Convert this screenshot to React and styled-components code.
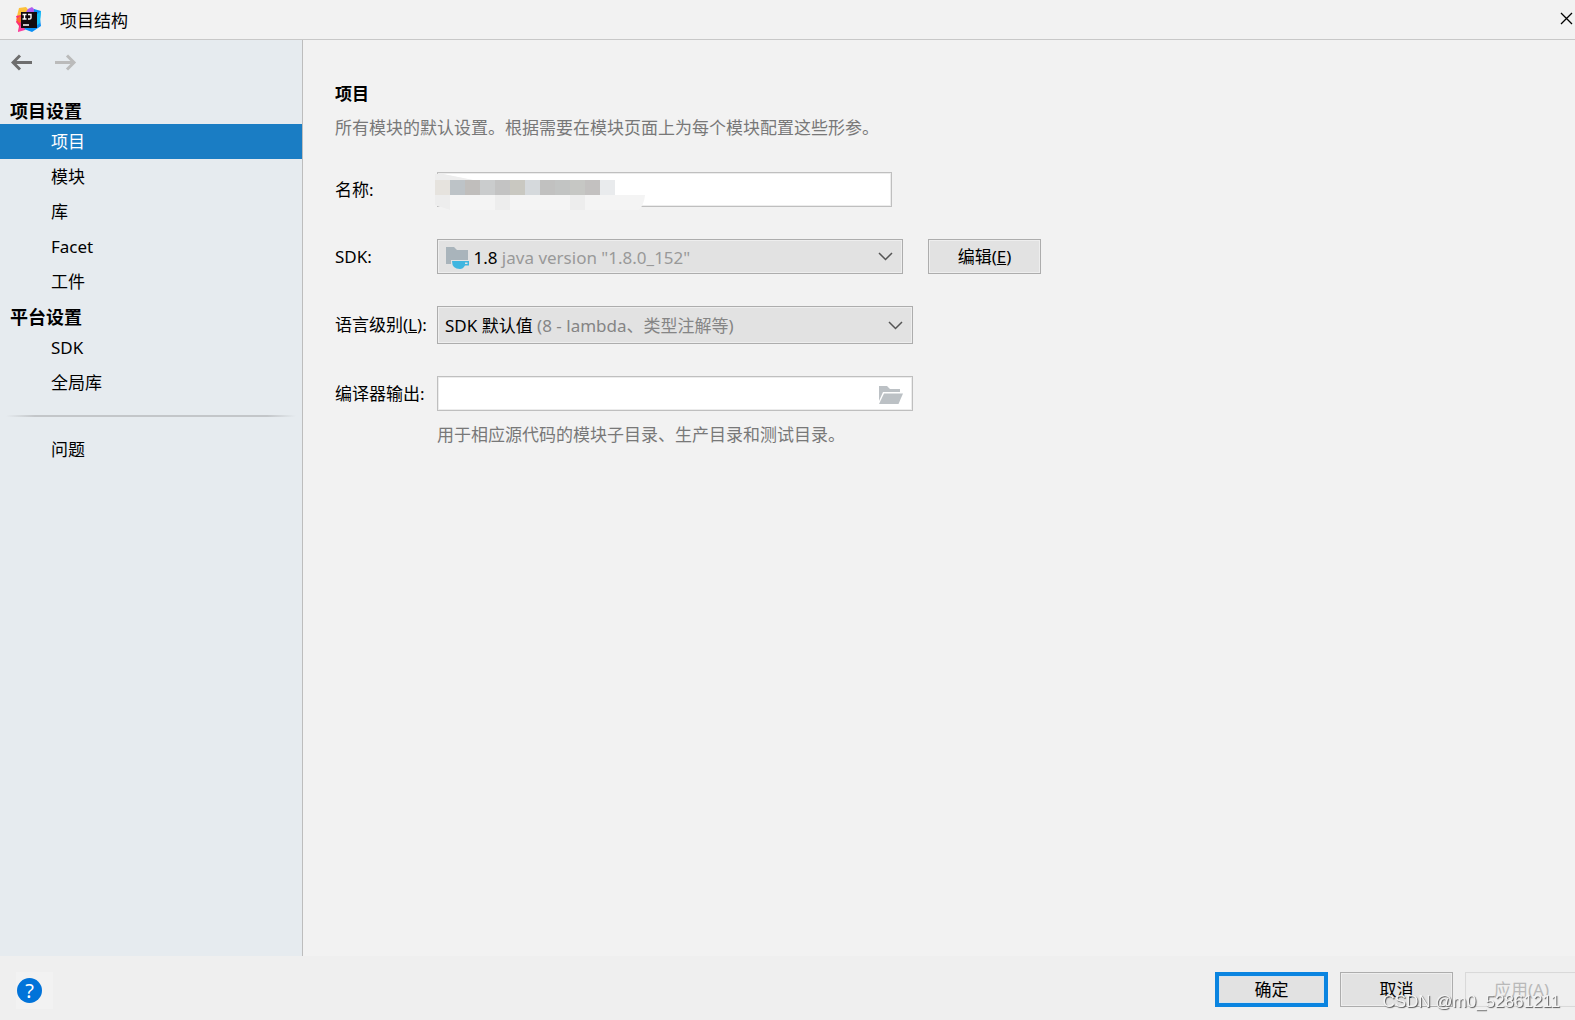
//Packages
import React, { useState } from "react";
import styled, { createGlobalStyle, css } from "styled-components";

//Styles
const GlobalStyle = createGlobalStyle`
  * {
    box-sizing: border-box;
  }

  body {
    margin: 0;
    background: #f2f2f2;
  }

  body, button, input, select {
    color: #000;
    font-family: "Noto Sans", "Noto Sans CJK SC", sans-serif;
    font-size: 17px;
    line-height: 24px;
  }
`;

const Window = styled.div`
  display: flex;
  flex-direction: column;
  min-height: 100vh;
  overflow: hidden;
`;

const TitleBar = styled.header`
  display: flex;
  align-items: center;
  height: 40px;
  padding: 0 2px 0 15px;
  border-bottom: 1px solid #c8c8c8;
`;

const WindowTitle = styled.h1`
  flex: 1;
  margin: 0 0 0 18px;
  padding-top: 2px;
  font-size: 17px;
  font-weight: 400;
`;

const IconButton = styled.button`
  display: flex;
  padding: 0;
  border: none;
  background: none;
`;

const CloseButton = styled(IconButton)`
  padding-bottom: 3px;
`;

const Content = styled.div`
  display: flex;
  flex: 1;
`;

const Sidebar = styled.nav`
  flex: 0 0 303px;
  border-right: 1px solid #bdbdbd;
  background: #e6ebef;
`;

const History = styled.div`
  display: flex;
  gap: 22px;
  height: 53px;
  padding: 11px 11px 0;
`;

const GroupTitle = styled.h2`
  height: 31px;
  margin: 0;
  padding: 5px 10px 0;
  font-size: 18px;
  font-weight: 700;
  line-height: 26px;
`;

const List = styled.ul`
  margin: 0;
  padding: 0;
  list-style: none;
`;

const NavLink = styled.a`
  display: block;
  height: 35px;
  padding-left: 51px;
  color: ${({ $active }) => ($active ? "#fff" : "#000")};
  background: ${({ $active }) => ($active ? "#1a7dc4" : "transparent")};
  line-height: 35px;
  text-decoration: none;
`;

const Divider = styled.hr`
  height: 2px;
  margin: 15px 6px;
  border: none;
  background: linear-gradient(
    to right,
    transparent,
    #c3c6c9 10%,
    #c3c6c9 90%,
    transparent
  );
`;

const Main = styled.main`
  flex: 1;
  padding: 42px 32px;
`;

const Title = styled.h2`
  margin: 0 0 10px;
  font-size: 17px;
  font-weight: 700;
`;

const Muted = styled.p`
  margin: 0;
  color: #787878;
`;

const Form = styled.form`
  display: grid;
  grid-template-columns: 102px minmax(0, 604px);
  row-gap: 32px;
  align-items: center;
  margin-top: 32px;
`;

const Label = styled.label`
  white-space: nowrap;
`;

const FieldRow = styled.div`
  display: flex;
  gap: 25px;
`;

const Field = styled.div`
  position: relative;
  width: ${({ $width }) => $width}px;
`;

const TextField = styled.input`
  display: block;
  width: 100%;
  height: 35px;
  padding: 0 8px;
  border: 1px solid #bfbfbf;
  border-radius: 0;
  background: #fff;
  box-shadow: inset 0 0 0 1px #ececec;
  outline: none;
`;

const raised = css`
  border: 1px solid #adadad;
  border-radius: 0;
  background: #e2e2e2;
  box-shadow: inset 0 0 0 1px #eeeeee;
`;

//the value is drawn by SelectFace, since an option has only one colour
const Select = styled.select`
  ${raised}
  display: block;
  appearance: none;
  width: 100%;
  height: ${({ $tall }) => ($tall ? 38 : 35)}px;
  color: transparent;

  option {
    color: #000;
  }
`;

const SelectFace = styled.div`
  position: absolute;
  inset: 0;
  display: flex;
  align-items: center;
  padding: 2px 10px 0 8px;
  pointer-events: none;
  white-space: pre;

  > svg:last-child {
    margin: 0 0 2px auto;
  }
`;

const Detail = styled.span`
  color: ${({ $light }) => ($light ? "#999" : "#858585")};
`;

const BrowseButton = styled(IconButton)`
  position: absolute;
  top: 10px;
  right: 10px;
`;

const Mask = styled.svg`
  position: absolute;
  top: 0;
  left: -2px;
`;

const Hint = styled(Muted)`
  margin: 12px 0 0 102px;
`;

const Button = styled.button`
  ${raised}
  flex: 0 0 113px;
  height: 35px;
  padding: 0;

  ${({ $primary }) =>
    $primary &&
    css`
      border: 4px solid #0a84e0;
      box-shadow: inset 0 0 0 1px #d5e3ee;
    `}

  &:disabled {
    border-color: #d9d9d9;
    background: #efefef;
    color: #b9b9b9;
  }
`;

const Footer = styled.footer`
  display: flex;
  align-items: flex-start;
  gap: 12px;
  height: 64px;
  margin-right: -3px;
  padding: 16px 0 0 16px;
  background: #efefef;
`;

const Help = styled.button`
  display: flex;
  align-items: center;
  width: 37px;
  height: 37px;
  margin-right: auto;
  padding: 0 0 0 1px;
  border: none;
  background: #f2f2f2;

  span {
    width: 25px;
    height: 25px;
    border-radius: 50%;
    background: #0173d9;
    color: #fff;
    font-size: 20px;
    line-height: 25px;
  }
`;

const Watermark = styled.div`
  position: fixed;
  right: 15px;
  bottom: 6px;
  color: #f4f4f4;
  font-family: "Liberation Sans", sans-serif;
  font-size: 17px;
  text-shadow: 1px 1px 1px #555;
  pointer-events: none;
`;

//Icons
const LogoIcon = () => (
  <svg width="27" height="27" viewBox="0 0 27 27" aria-hidden="true">
    <path d="M4 2l7-1 4 5-3 8-10-4z" fill="#fdc13a" />
    <path d="M11 6l2-3 4-2 4 4-3 4-8-1z" fill="#b05cf0" />
    <path d="M1 10l5-1 6 6-3 6-6 5 1-6-3-4 1-3z" fill="#fe2c70" />
    <path d="M1 13l4-3 3 5-4 2z" fill="#ff6a2c" />
    <path d="M3 26l2-6 6 1-1 3z" fill="#fb3fa0" />
    <path d="M19 3l7 2-1 8 1 7-9 6-8-3 10-8z" fill="#0a8ff5" />
    <path d="M21 9l5-4-1 12-4 3z" fill="#18c0f5" />
    <path d="M6 6h16v16H6z" fill="#120a0d" />
    <path
      d="M7.500 8.500h4M9.500 8.500v4.500M7.500 13h4M13 8.500h3V12q0 1-1.500 1H13M8 19h6"
      fill="none"
      stroke="#fff"
      strokeWidth="1.400"
    />
  </svg>
);

const CloseIcon = () => (
  <svg width="13" height="13" viewBox="0 0 13 13" aria-hidden="true">
    <path d="M1 1l11 11M12 1L1 12" stroke="#000" strokeWidth="1.300" />
  </svg>
);

const ArrowIcon = ({ color, flip }) => (
  <svg width="22" height="22" viewBox="0 0 22 22" aria-hidden="true">
    <path
      d={flip ? "M0 11.500h19M12 4.500l7 7-7 7" : "M21 11.500H2M9 4.500l-7 7 7 7"}
      fill="none"
      stroke={color}
      strokeWidth="3"
    />
  </svg>
);

const ChevronIcon = () => (
  <svg width="15" height="15" viewBox="0 0 15 15" aria-hidden="true">
    <path
      d="M1 4l6.500 6.500L14 4"
      fill="none"
      stroke="#555"
      strokeWidth="1.500"
    />
  </svg>
);

const SdkIcon = () => (
  <svg width="24" height="24" viewBox="0 0 24 24" aria-hidden="true">
    <path d="M1 1h8l3 3h11v10H6v4H1z" fill="#a9b4bb" />
    <path
      d="M7 15h17v4.500h-4q-2 3.500-5 3.500Q7 23 7 15z"
      fill="#40b6e0"
    />
    <path d="M20 16.500h2.500v1.500H20z" fill="#e2e2e2" />
  </svg>
);

const FolderIcon = () => (
  <svg width="24" height="18" viewBox="0 0 24 18" aria-hidden="true">
    <path d="M0 0h8l3 3h10v3H4L0 15z" fill="#bcc1c5" />
    <path d="M5 7.500h19L19.500 18H0z" fill="#bcc1c5" />
  </svg>
);

//Blocks that hide the project name
const maskColors = [
  "#e6e3de",
  "#bdc3c7",
  "#c0bebc",
  "#cacccd",
  "#c3c3c3",
  "#c9c8c1",
  "#d5d9dc",
  "#c1c1c0",
  "#c2c4c3",
  "#c6c7c4",
  "#c3c1c0",
  "#e9ebed",
];

const NameMask = () => (
  <Mask width="211" height="38" viewBox="0 0 211 38" aria-hidden="true">
    <path d="M0 2h8l30 6v15h172q-1 10-6 15H14L0 33z" fill="#f4f4f4" />
    <path
      d="M0 2h8l30 6H0zM0 23h15v15l-15-5zM60 23h15v15H60zM135 23h15v15h-15z"
      fill="#ededed"
    />
    {maskColors.map((color, i) => (
      <rect key={color} x={i * 15} y="8" width="15" height="15" fill={color} />
    ))}
  </Mask>
);

const projectItems = ["项目", "模块", "库", "Facet", "工件"];
const platformItems = ["SDK", "全局库"];

const NavList = ({ items, active, onSelect }) => (
  <List>
    {items.map((item) => (
      <li key={item}>
        <NavLink
          href="#"
          $active={item === active}
          onClick={(e) => {
            e.preventDefault();
            onSelect(item);
          }}
        >
          {item}
        </NavLink>
      </li>
    ))}
  </List>
);

//Project structure dialog
const App = () => {
  const [active, setActive] = useState("项目");

  return (
    <Window>
      <GlobalStyle />
      <TitleBar>
        <LogoIcon />
        <WindowTitle>项目结构</WindowTitle>
        <CloseButton aria-label="关闭">
          <CloseIcon />
        </CloseButton>
      </TitleBar>
      <Content>
        <Sidebar>
          <History>
            <IconButton aria-label="后退">
              <ArrowIcon color="#6e6e6e" />
            </IconButton>
            <IconButton aria-label="前进" disabled>
              <ArrowIcon color="#bbb" flip />
            </IconButton>
          </History>
          <GroupTitle>项目设置</GroupTitle>
          <NavList items={projectItems} active={active} onSelect={setActive} />
          <GroupTitle>平台设置</GroupTitle>
          <NavList items={platformItems} active={active} onSelect={setActive} />
          <Divider />
          <NavList items={["问题"]} active={active} onSelect={setActive} />
        </Sidebar>
        <Main>
          <Title>项目</Title>
          <Muted>
            所有模块的默认设置。根据需要在模块页面上为每个模块配置这些形参。
          </Muted>
          <Form>
            <Label htmlFor="name">名称:</Label>
            <Field $width={455}>
              <TextField id="name" type="text" />
              <NameMask />
            </Field>
            <Label htmlFor="sdk">SDK:</Label>
            <FieldRow>
              <Field $width={466}>
                <Select id="sdk">
                  <option>1.8</option>
                </Select>
                <SelectFace aria-hidden="true">
                  <SdkIcon />
                  <span> 1.8 </span>
                  <Detail $light>java version "1.8.0_152"</Detail>
                  <ChevronIcon />
                </SelectFace>
              </Field>
              <Button type="button">
                编辑(<u>E</u>)
              </Button>
            </FieldRow>
            <Label htmlFor="level">
              语言级别(<u>L</u>):
            </Label>
            <Field $width={476}>
              <Select id="level" $tall>
                <option>SDK 默认值</option>
              </Select>
              <SelectFace aria-hidden="true">
                <span>SDK 默认值 </span>
                <Detail>(8 - lambda、类型注解等)</Detail>
                <ChevronIcon />
              </SelectFace>
            </Field>
            <Label htmlFor="output">编译器输出:</Label>
            <Field $width={476}>
              <TextField id="output" type="text" />
              <BrowseButton type="button" aria-label="浏览">
                <FolderIcon />
              </BrowseButton>
            </Field>
          </Form>
          <Hint>用于相应源代码的模块子目录、生产目录和测试目录。</Hint>
        </Main>
      </Content>
      <Footer>
        <Help aria-label="帮助">
          <span>?</span>
        </Help>
        <Button $primary>确定</Button>
        <Button>取消</Button>
        <Button disabled>应用(A)</Button>
      </Footer>
      <Watermark>CSDN @m0_52861211</Watermark>
    </Window>
  );
};

export default App;
